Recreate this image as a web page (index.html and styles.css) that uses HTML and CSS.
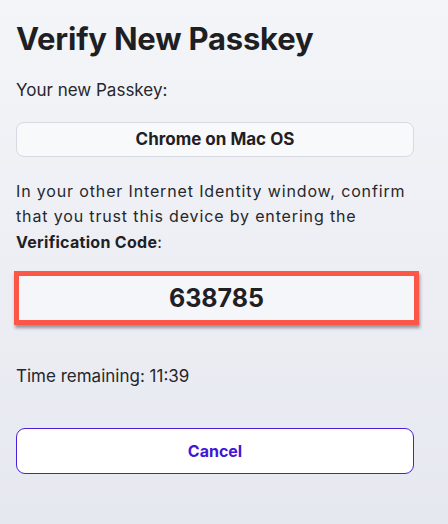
FILE: index.html
```html
<!DOCTYPE html>
<html lang="en">
<head>
<meta charset="utf-8">
<title>Verify New Passkey</title>
<link rel="stylesheet" href="styles.css">
</head>
<body>
<main class="page">
  <h1 class="title">Verify New Passkey</h1>
  <p class="label">Your new Passkey:</p>
  <div class="device">Chrome on Mac OS</div>
  <p class="info">In your other Internet Identity window, confirm that you trust this device by entering the <strong>Verification Code</strong>:</p>
  <div class="highlight">
    <div class="code">638785</div>
  </div>
  <p class="label timer">Time remaining: 11:39</p>
  <button class="cancel" type="button">Cancel</button>
</main>
</body>
</html>
```
FILE: styles.css
```css
html, body {
  margin: 0;
  padding: 0;
}
body {
  width: 448px;
  height: 524px;
  overflow: hidden;
  background: linear-gradient(180deg, #f4f5f8 0%, #e6e8f0 100%);
  font-family: Inter, "Noto Sans", sans-serif;
  color: #1f2024;
}
.page {
  width: 398px;
  padding: 20px 0 0 16px;
  display: flex;
  flex-direction: column;
}
.title {
  margin: 0;
  font-size: 31px;
  line-height: 38px;
  font-weight: 700;
  letter-spacing: -0.2px;
  color: #1e1f23;
}
.label {
  margin: 20px 0 0;
  font-size: 17px;
  line-height: 25.6px;
  color: #26272b;
}
.device {
  margin-top: 18px;
  height: 33px;
  border: 1px solid #d8d9e3;
  border-radius: 8px;
  background: #f8f9fb;
  display: flex;
  align-items: center;
  justify-content: center;
  font-size: 17px;
  font-weight: 700;
  color: #1f2024;
}
.info {
  margin: 22px 0 0;
  font-size: 16px;
  line-height: 25.6px;
  letter-spacing: 0.85px;
  color: #26272b;
}
.info strong {
  font-weight: 700;
  letter-spacing: 0.3px;
  color: #1f2024;
}
.highlight {
  margin: 16px -5px 0 -2px;
  border: 5px solid #fb5648;
  box-shadow: 1px 3px 3px rgba(40, 40, 50, 0.45), inset 0 3px 3px rgba(40, 40, 50, 0.35);
}
.code {
  height: 44px;
  background: #f5f6f9;
  display: flex;
  align-items: center;
  justify-content: center;
  font-size: 25px;
  font-weight: 700;
  color: #1f2024;
}
.timer {
  margin-top: 37px;
  font-size: 17px;
  line-height: 28.8px;
}
.cancel {
  margin-top: 37px;
  height: 46px;
  border: 1px solid #4a1fdc;
  border-radius: 9px;
  background: #ffffff;
  font-family: Inter, "Noto Sans", sans-serif;
  font-size: 16px;
  font-weight: 700;
  color: #4316d6;
  cursor: pointer;
}
```
